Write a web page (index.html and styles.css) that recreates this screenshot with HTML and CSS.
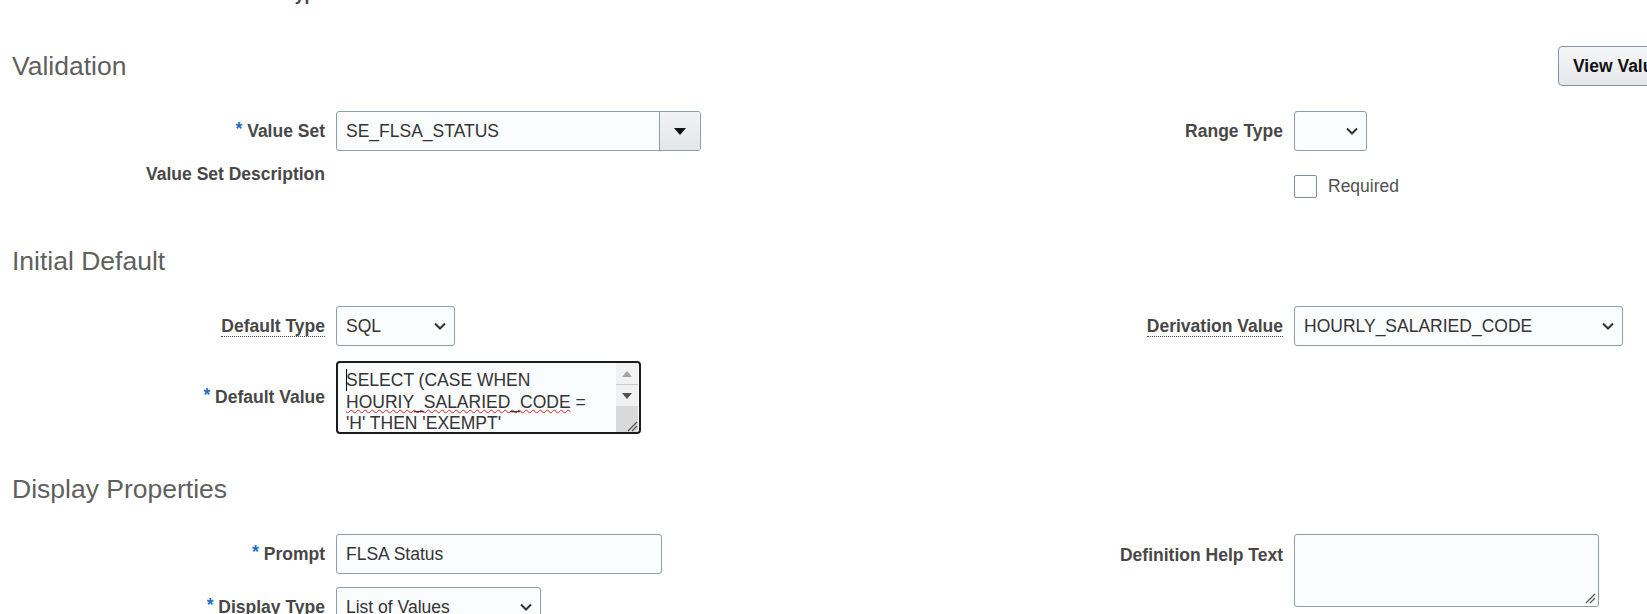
FILE: index.html
```html
<!DOCTYPE html>
<html lang="en">
<head>
  <meta charset="UTF-8">
  <title>Edit Segment</title>
  <meta name="viewport" content="width=device-width, initial-scale=1.0">
  <link rel="stylesheet" href="styles.css">
</head>
<body>

<!-- tail of the segment block above -->
<div class="row row-plain row-clip">
  <span class="label">Data Type</span>
</div>

<section class="section">
  <div class="section-head">
    <h2>Validation</h2>
    <button class="btn" type="button">View Value Set</button>
  </div>
  <div class="columns">
    <div class="col">
      <div class="row">
        <label class="label"><span class="req">*</span> Value Set</label>
        <div class="combo w-valueset">
          <span class="combo-text">SE_FLSA_STATUS</span>
          <span class="combo-btn">
            <svg width="12" height="7" viewBox="0 0 12 7"><polygon points="0,0 12,0 6,7" fill="#111"/></svg>
          </span>
        </div>
      </div>
      <div class="row row-plain row-desc">
        <span class="label">Value Set Description</span>
      </div>
    </div>
    <div class="col">
      <div class="row">
        <label class="label">Range Type</label>
        <div class="select w-range">
          <span></span>
          <svg class="chev" width="12" height="8" viewBox="0 0 12 8"><path d="M1 1.5 L6 6.5 L11 1.5" fill="none" stroke="#333" stroke-width="2"/></svg>
        </div>
      </div>
      <div class="row row-check">
        <span></span>
        <label class="check"><span class="box"></span>Required</label>
      </div>
    </div>
  </div>
</section>

<section class="section">
  <div class="section-head">
    <h2>Initial Default</h2>
  </div>
  <div class="columns">
    <div class="col">
      <div class="row">
        <label class="label"><span class="hint">Default Type</span></label>
        <div class="select w-type">
          <span>SQL</span>
          <svg class="chev" width="12" height="8" viewBox="0 0 12 8"><path d="M1 1.5 L6 6.5 L11 1.5" fill="none" stroke="#333" stroke-width="2"/></svg>
        </div>
      </div>
      <div class="row row-area">
        <label class="label"><span class="req">*</span> Default Value</label>
        <div class="textarea focused w-long">
          <div class="ta-text"><span class="caret"></span>SELECT (CASE WHEN<br><span class="typo">HOURIY_SALARIED_CODE</span> =<br>'H' THEN 'EXEMPT'<br>ELSE 'NON-EXEMPT' END)</div>
          <div class="ta-scroll">
            <div class="sb-arrow">
              <svg width="10" height="6" viewBox="0 0 10 6"><polygon points="0,6 10,6 5,0" fill="#a3a3a3"/></svg>
            </div>
            <div class="sb-arrow sb-down">
              <svg width="10" height="6" viewBox="0 0 10 6"><polygon points="0,0 10,0 5,6" fill="#505050"/></svg>
            </div>
            <div class="sb-thumb">
              <svg width="12" height="12" viewBox="0 0 12 12"><path d="M11 2 L2 11 M11 6 L6 11" stroke="#555" stroke-width="1.2"/></svg>
            </div>
          </div>
        </div>
      </div>
    </div>
    <div class="col">
      <div class="row">
        <label class="label"><span class="hint">Derivation Value</span></label>
        <div class="select w-deriv">
          <span>HOURLY_SALARIED_CODE</span>
          <svg class="chev" width="12" height="8" viewBox="0 0 12 8"><path d="M1 1.5 L6 6.5 L11 1.5" fill="none" stroke="#333" stroke-width="2"/></svg>
        </div>
      </div>
    </div>
  </div>
</section>

<section class="section">
  <div class="section-head">
    <h2>Display Properties</h2>
  </div>
  <div class="columns">
    <div class="col">
      <div class="row">
        <label class="label"><span class="req">*</span> Prompt</label>
        <div class="input w-prompt">FLSA Status</div>
      </div>
      <div class="row">
        <label class="label"><span class="req">*</span> Display Type</label>
        <div class="select w-display">
          <span>List of Values</span>
          <svg class="chev" width="12" height="8" viewBox="0 0 12 8"><path d="M1 1.5 L6 6.5 L11 1.5" fill="none" stroke="#333" stroke-width="2"/></svg>
        </div>
      </div>
    </div>
    <div class="col">
      <div class="row row-top">
        <label class="label">Definition Help Text</label>
        <div class="textarea plain w-long">
          <svg class="grip" width="12" height="12" viewBox="0 0 12 12"><path d="M11 2 L2 11 M11 6 L6 11" stroke="#555" stroke-width="1.2"/></svg>
        </div>
      </div>
    </div>
  </div>
</section>

</body>
</html>
```

FILE: styles.css
```css
html, body { overflow: hidden; }
body {
  margin: 0;
  padding: 0 12px;
  font-family: "Liberation Sans", Arial, sans-serif;
  font-size: 17.5px;
  color: #333;
  background: #fff;
}

/* sections */
.section { margin-top: 35px; }
.row-clip + .section { margin-top: 41px; }
.section-head {
  display: grid;
  grid-template-columns: 1546px auto;
  align-items: center;
  min-height: 40px;
}
.section-head h2 {
  margin: 0;
  font-size: 26.5px;
  font-weight: normal;
  color: #5f5f5f;
}
.btn {
  height: 40px;
  padding: 0 14px;
  border: 1px solid #8395a2;
  border-radius: 4px;
  background: linear-gradient(#f5f6f7, #e4e7ea);
  font-family: inherit;
  font-size: 17.5px;
  font-weight: bold;
  color: #111;
  white-space: nowrap;
  text-align: left;
}

.columns {
  display: grid;
  grid-template-columns: 958px 1fr;
  margin-top: 25px;
  align-items: start;
}

/* form rows */
.row {
  display: grid;
  grid-template-columns: 313px auto;
  column-gap: 11px;
  align-items: center;
  min-height: 40px;
  margin-top: 13px;
}
.col > .row:first-child { margin-top: 0; }
.row-plain { min-height: 0; }
.row-clip { margin-top: -16px; }
.col > .row-desc { margin-top: 13px; }
.col > .row-check { margin-top: 15px; }
.col > .row-area { margin-top: 15px; }
.row-top { align-items: start; }
.row-top .label { padding-top: 11px; }

.label {
  text-align: right;
  font-weight: bold;
  color: #474747;
  white-space: nowrap;
}
.req { color: #1d6fc4; position: relative; top: -2px; }
.hint { border-bottom: 1px dotted #444; }

/* fields */
.input, .select, .combo, .textarea {
  box-sizing: border-box;
  border: 1px solid #8c9ea9;
  border-radius: 3px;
  background: #fbfcfd;
}
.input, .select {
  height: 40px;
  padding: 0 8px 0 9px;
  display: flex;
  align-items: center;
  justify-content: space-between;
  white-space: nowrap;
}
.combo {
  height: 40px;
  display: flex;
  overflow: hidden;
}
.combo-text {
  flex: 1;
  padding-left: 9px;
  line-height: 38px;
}
.combo-btn {
  width: 40px;
  border-left: 1px solid #8c9ea9;
  background: linear-gradient(#f1f3f5, #e3e7ea);
  display: flex;
  align-items: center;
  justify-content: center;
}
.chev { flex: none; }

.w-valueset { width: 365px; }
.w-range { width: 73px; }
.w-type { width: 119px; }
.w-deriv { width: 329px; }
.w-long { width: 305px; }
.w-prompt { width: 326px; }
.w-display { width: 205px; }

/* text areas */
.textarea {
  height: 73px;
  display: flex;
  overflow: hidden;
}
.textarea.plain {
  align-items: flex-end;
  justify-content: flex-end;
  padding: 0 2px 2px 0;
}
.textarea.focused {
  border: 2px solid #1c1c1c;
  border-radius: 4px;
  background: #fbfcfe;
}
.ta-text {
  flex: 1;
  padding: 6px 8px 0 8px;
  line-height: 21.5px;
  white-space: nowrap;
  overflow: hidden;
}
.caret {
  display: inline-block;
  width: 1px;
  height: 22px;
  margin-right: -1px;
  background: #000;
  vertical-align: -5px;
}
.typo {
  text-decoration: underline wavy #e02020;
  text-decoration-thickness: 1px;
  text-underline-offset: 1px;
}
.ta-scroll {
  width: 22px;
  margin-right: 1px;
  display: flex;
  flex-direction: column;
  background: #f1f1f1;
}
.sb-arrow {
  height: 21px;
  display: flex;
  align-items: center;
  justify-content: center;
}
.sb-down { border-top: 1px solid #c9c9c9; }
.sb-thumb {
  flex: 1;
  background: #d9d9d9;
  display: flex;
  align-items: flex-end;
  justify-content: flex-end;
}

/* checkbox */
.check {
  display: flex;
  align-items: center;
  gap: 11px;
  color: #505050;
}
.box {
  width: 23px;
  height: 23px;
  box-sizing: border-box;
  border: 1px solid #7d8f9b;
  border-radius: 2px;
  background: #fff;
}
```
